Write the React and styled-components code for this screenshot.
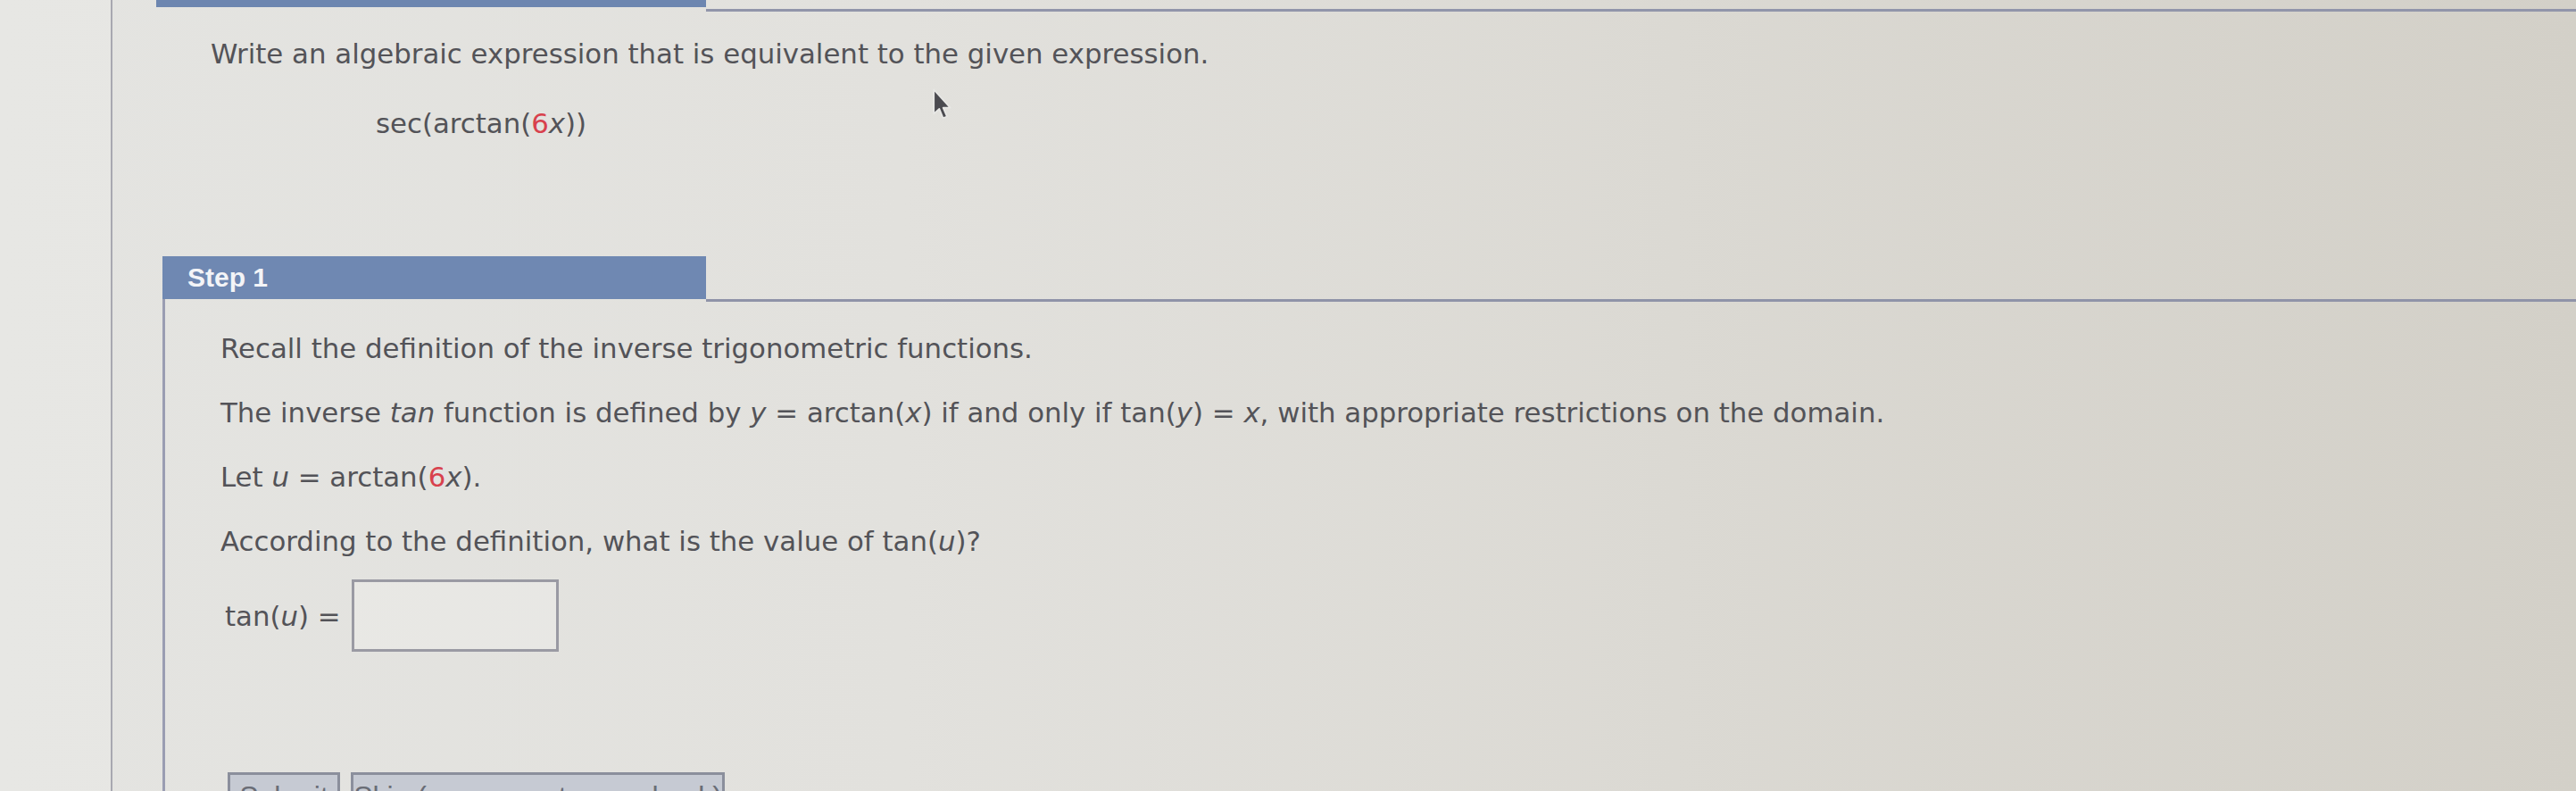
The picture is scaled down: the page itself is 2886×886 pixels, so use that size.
import React from 'react';
import styled, {createGlobalStyle} from 'styled-components';

const Global = createGlobalStyle`
  html, body {
    margin: 0;
    padding: 0;
  }

  body {
    font-family: "DejaVu Sans", Verdana, sans-serif;
    color: #535358;
  }
`;

const Page = styled.div`
  display: flex;
  height: 886px;
  overflow: hidden;
  background: linear-gradient(90deg, #e4e4e1 0%, #e2e1dd 35%, #dbd9d3 65%, #d3d0c8 100%);
`;

const Sidebar = styled.div`
  flex: none;
  width: 124px;
  border-right: 2px solid #a8a8b0;
  background: rgba(255, 255, 255, 0.12);
`;

const Main = styled.div`
  position: relative;
  flex: 1;
  padding-left: 49px;
`;

const TabStrip = styled.div`
  display: flex;
  height: 16px;
`;

const BlueTab = styled.div`
  width: 616px;
  height: 8px;
  background: #6d86b0;
`;

const TabLine = styled.div`
  flex: 1;
  height: 10px;
  border-bottom: 3px solid #9195aa;
`;

const Question = styled.div`
  padding-left: 61px;
  margin-top: 26px;
`;

const Line = styled.div`
  font-size: 30.8px;
  line-height: 36px;
  white-space: nowrap;
  margin-top: ${p => p.$gap || 0}px;
  padding-left: ${p => p.$indent || 0}px;
`;

const Red = styled.span`
  color: #d8414d;
`;

const Var = styled.i`
  font-style: italic;
`;

const StepPanel = styled.div`
  margin-top: 131px;
  margin-left: 7px;
`;

const StepHead = styled.div`
  display: flex;
  height: 48px;
`;

const StepTab = styled.div`
  width: 581px;
  padding-left: 28px;
  background: #6f88b2;
  color: #f3f4f7;
  font-family: "Liberation Sans", Arial, sans-serif;
  font-weight: bold;
  font-size: 30px;
  line-height: 48px;
`;

const StepRule = styled.div`
  flex: 1;
  border-bottom: 3px solid #8f93a8;
  margin-bottom: -3px;
`;

const StepBody = styled.div`
  border-left: 3px solid #9a9db2;
  padding: 37px 0 0 62px;
  height: 600px;
`;

const AnswerRow = styled.div`
  display: flex;
  align-items: center;
  gap: 12px;
  margin-top: 25px;
  padding-left: 5px;
`;

const AnswerBox = styled.div`
  width: 226px;
  height: 75px;
  border: 3px solid #9a9aa3;
  background: rgba(255, 255, 255, 0.18);
`;

const Buttons = styled.div`
  display: flex;
  gap: 12px;
  margin-top: 135px;
  padding-left: 8px;
`;

const Button = styled.div`
  width: ${p => p.$w}px;
  height: 52px;
  box-sizing: border-box;
  border: 3px solid #8b8f9c;
  background: #c6cad3;
  color: #6a6d76;
  font-family: "Liberation Sans", Arial, sans-serif;
  font-size: 32px;
  line-height: 32px;
  padding-top: 8px;
  text-align: center;
  white-space: nowrap;
`;

const Cursor = styled.svg`
  position: absolute;
  left: 919px;
  top: 99px;
  width: 22px;
  height: 36px;
`;

function App() {
  return (
    <>
      <Global/>
      <Page>
        <Sidebar/>
        <Main>
          <TabStrip>
            <BlueTab/>
            <TabLine/>
          </TabStrip>

          <Question>
            <Line>Write an algebraic expression that is equivalent to the given expression.</Line>
            <Line $gap={42} $indent={185}>sec(arctan(<Red>6</Red><Var>x</Var>))</Line>
          </Question>

          <Cursor viewBox="0 0 18 29">
            <path d="M1 1 L1 23 L6 18.5 L9.5 27 L13 25.5 L9.5 17.5 L16 17.5 Z"
                  fill="#4b4b50" stroke="#e8e8e6" strokeWidth="1.4" strokeLinejoin="round"/>
          </Cursor>

          <StepPanel>
            <StepHead>
              <StepTab>Step 1</StepTab>
              <StepRule/>
            </StepHead>

            <StepBody>
              <Line>Recall the definition of the inverse trigonometric functions.</Line>
              <Line $gap={36}>
                The inverse <Var>tan</Var> function is defined by <Var>y</Var> = arctan(<Var>x</Var>) if and only
                if tan(<Var>y</Var>) = <Var>x</Var>, with appropriate restrictions on the domain.
              </Line>
              <Line $gap={36}>Let <Var>u</Var> = arctan(<Red>6</Red><Var>x</Var>).</Line>
              <Line $gap={36}>According to the definition, what is the value of tan(<Var>u</Var>)?</Line>

              <AnswerRow>
                <Line>tan(<Var>u</Var>) =</Line>
                <AnswerBox/>
              </AnswerRow>

              <Buttons>
                <Button $w={126}>Submit</Button>
                <Button $w={419}>Skip (you cannot come back)</Button>
              </Buttons>
            </StepBody>
          </StepPanel>
        </Main>
      </Page>
    </>
  );
}

export default App;
